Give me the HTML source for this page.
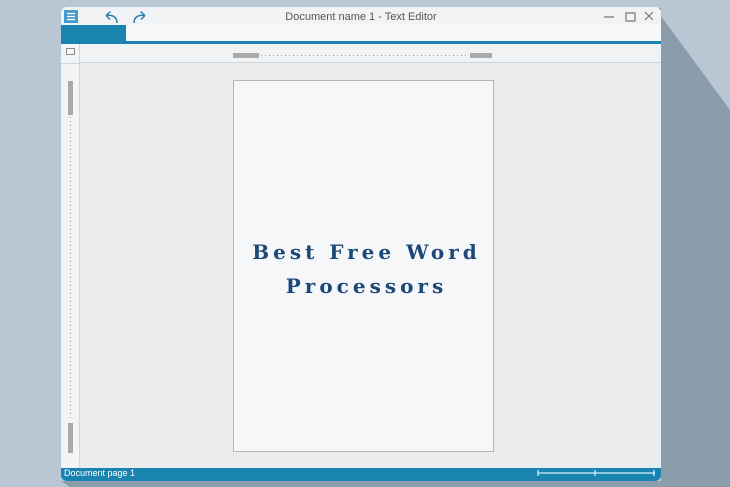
<!DOCTYPE html>
<html><head><style>
*{margin:0;padding:0;box-sizing:border-box}
body{width:730px;height:487px;overflow:hidden;background:#b9c7d4;position:relative;font-family:"Liberation Sans",sans-serif}
.abs{position:absolute}
</style></head><body>
<svg class="abs" style="left:0;top:0" width="730" height="487">
<polygon points="655,8 730,110 730,487 70,487 61,481 661,481 661,8" fill="#8b9caa"/>
</svg>
<div class="abs" style="left:61px;top:7px;width:600px;height:474px;background:#ebecee;border-radius:6px;overflow:hidden">
  <div class="abs" style="left:0;top:0;width:600px;height:18px;background:#f1f3f5"></div>
  <div class="abs" style="left:0;top:18px;width:600px;height:16px;background:#f7f8fa"></div>
  <div class="abs" style="left:0;top:18px;width:65px;height:17px;background:#1a84b0"></div>
  <div class="abs" style="left:0;top:34px;width:600px;height:3px;background:#1a84b0"></div>
  <div class="abs" style="left:0;top:37px;width:600px;height:19px;background:#f1f2f4;border-bottom:1px solid #cdd6dd"></div>
  <div class="abs" style="left:0;top:37px;width:19px;height:425px;background:#f3f4f6;border-right:1px solid #cfd6dc"></div>
  <div class="abs" style="left:5px;top:41px;width:9px;height:7px;border:1px solid #888;background:#f8f8f8"></div>
  <div class="abs" style="left:0;top:56px;width:19px;height:1px;background:#cdd6dd"></div>
  <div class="abs" style="left:0;top:461px;width:600px;height:13px;background:#1a84b0"></div>
  <div class="abs" style="left:3px;top:461px;font-size:9px;color:#fff">Document page 1</div>
  <svg class="abs" style="left:475px;top:461px" width="125" height="12"><path d="M2 5h117M2 2v6M59 2v6M118 2v6" stroke="#d8eef7" stroke-width="1.3" fill="none"/></svg>
  <div class="abs" style="left:0;top:4px;width:600px;text-align:center;font-size:11px;color:#555">Document name 1 - Text Editor</div>
  <svg class="abs" style="left:3px;top:3px" width="90" height="16">
    <rect x="0" y="0" width="14" height="13" fill="#4a9cc8"/>
    <path d="M3 3.5h8M3 6.5h8M3 9.5h8" stroke="#fff" stroke-width="1.2"/>
    <path d="M42 5.5c6-1 11 1 11 7.5M42 5.5l4.5-4M42 5.5l4 4" stroke="#2a7fae" stroke-width="1.5" fill="none"/>
    <path d="M81 5.5c-6-1-11 1-11 7.5M81 5.5l-4.5-4M81 5.5l-4 4" stroke="#2a7fae" stroke-width="1.5" fill="none"/>
  </svg>
  <svg class="abs" style="left:540px;top:3px" width="56" height="14">
    <path d="M3 7h10M25 3h9v8h-9zM44 2l8 8M52 2l-8 8" stroke="#777" stroke-width="1.2" fill="none"/>
  </svg>
  <svg class="abs" style="left:170px;top:45px" width="265" height="8">
    <rect x="2" y="1" width="26" height="5" fill="#aaa"/>
    <rect x="239" y="1" width="22" height="5" fill="#aaa"/>
    <path d="M30 3.5h207" stroke="#999" stroke-width="1" stroke-dasharray="1 3"/>
  </svg>
  <svg class="abs" style="left:6px;top:74px" width="8" height="380">
    <rect x="1" y="0" width="5" height="34" fill="#aaa"/>
    <rect x="1" y="342" width="5" height="30" fill="#aaa"/>
    <path d="M3.5 36v304" stroke="#999" stroke-width="1" stroke-dasharray="1 3"/>
  </svg>
  <div class="abs" style="left:172px;top:73px;width:261px;height:372px;background:#f6f7f9;border:1px solid #b5b8bb"></div>
  <div class="abs" style="left:175px;top:228px;width:261px;text-align:center;font-family:'DejaVu Serif',serif;font-weight:bold;font-size:20px;letter-spacing:4px;line-height:34px;color:#1e4878;white-space:nowrap">Best Free Word<br>Processors</div>
</div>
</body></html>
